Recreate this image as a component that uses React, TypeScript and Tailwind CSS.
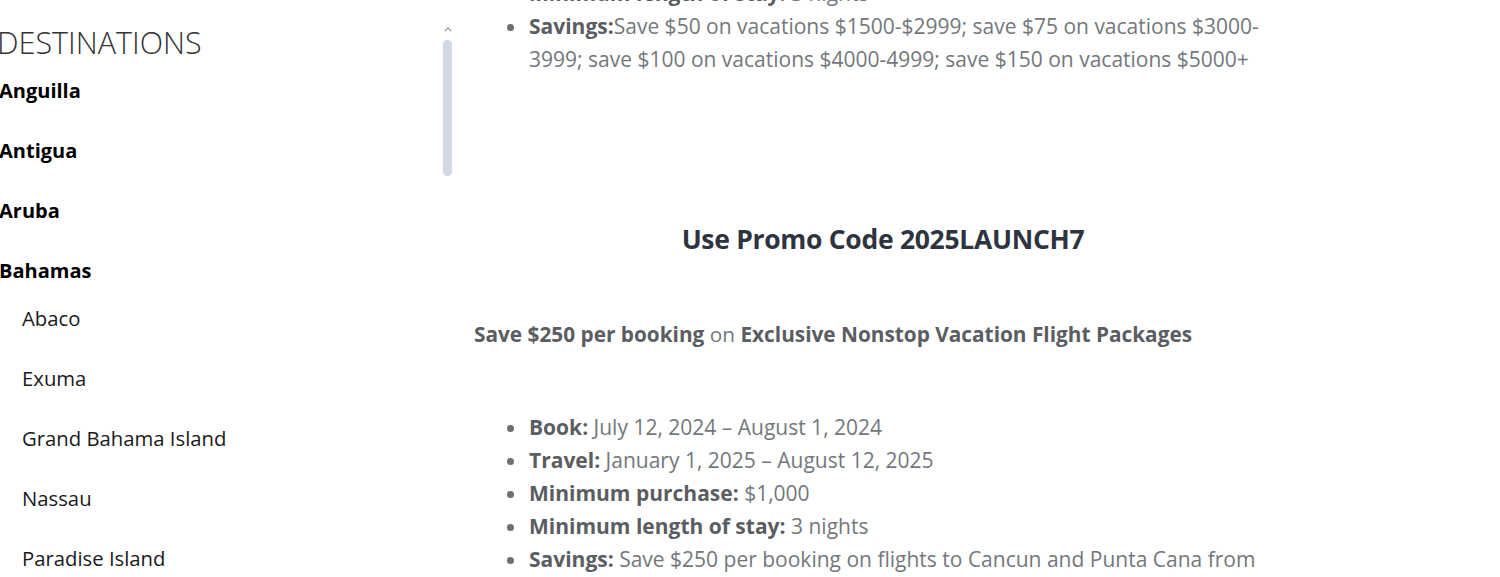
import React from 'react';

const COUNTRIES = ['Anguilla', 'Antigua', 'Aruba', 'Bahamas'];
const BAHAMAS = ['Abaco', 'Exuma', 'Grand Bahama Island', 'Nassau', 'Paradise Island'];

const PROMO_TERMS = [
  { label: 'Book:', value: 'July 12, 2024 – August 1, 2024' },
  { label: 'Travel:', value: 'January 1, 2025 – August 12, 2025' },
  { label: 'Minimum purchase:', value: '$1,000' },
  { label: 'Minimum length of stay:', value: '3 nights' },
  { label: 'Savings:', value: 'Save $250 per booking on flights to Cancun and Punta Cana from Chicago O’Hare' },
];

const font = { fontFamily: '"Open Sans", "Noto Sans", sans-serif' };

const Sidebar = () => (
  <div className="flex w-[477px] shrink-0 -ml-[3px]">
    <div className="flex flex-col w-[446px]">
      <h2 className="mt-[22px] h-[40px] leading-[40px] text-[30.5px] font-light text-[#333]">DESTINATIONS</h2>
      <div className="flex flex-col gap-[30px] mt-[14px] pl-[2px]">
        {COUNTRIES.map((c) => (
          <a key={c} className="h-[30px] leading-[30px] text-[20px] font-bold text-black">{c}</a>
        ))}
      </div>
      <div className="flex flex-col gap-[30px] mt-[17px] pl-[25px]">
        {BAHAMAS.map((c) => (
          <a key={c} className="h-[30px] leading-[30px] text-[20.3px] text-[#1a1a1a]">{c}</a>
        ))}
      </div>
    </div>
    {/* scrollbar */}
    <div className="flex flex-col items-center w-[9px] mt-[25px]">
      <svg width="10" height="8" viewBox="0 0 10 8" className="text-[#9aa1aa]">
        <path d="M2 6 L5 3 L8 6" fill="none" stroke="currentColor" strokeWidth="1.4" />
      </svg>
      <div className="w-[9px] h-[136px] mt-[7px] rounded-full bg-[#cfd8e3]" />
    </div>
  </div>
);

const Term = ({ label, value }: { label: string; value: React.ReactNode }) => (
  <li className="pl-[1px]">
    <span className="font-bold text-[#5a5d61]">{label}</span> {value}
  </li>
);

export default function App() {
  return (
    <div className="w-[1500px] h-[577px] overflow-hidden bg-white flex" style={font}>
      <Sidebar />
      <div className="flex flex-col w-[818px] text-[21px] leading-[33px] text-[#74777c]">
        <ul className="list-disc pl-[54px] mt-[-23px] marker:text-[#6c7075]">
          <Term label="Minimum length of stay:" value="3 nights" />
          <li className="pl-[1px]">
            <span className="font-bold text-[#5a5d61]">Savings:</span>Save $50 on vacations $1500-$2999; save $75 on vacations $3000-<wbr />3999; save $100 on vacations $4000-4999; save $150 on vacations $5000+
          </li>
        </ul>
        <h3 className="mt-[145px] h-[36px] leading-[36px] text-center text-[26.5px] font-bold text-[#2d3440] tracking-[-0.3px]">
          Use Promo Code 2025LAUNCH7
        </h3>
        <p className="mt-[61px] text-[20.8px]">
          <span className="font-bold text-[#5a5d61]">Save $250 per booking</span> on{' '}
          <span className="font-bold text-[#5a5d61]">Exclusive Nonstop Vacation Flight Packages</span>
        </p>
        <ul className="list-disc pl-[54px] mt-[60px] marker:text-[#6c7075]">
          {PROMO_TERMS.map((t) => (
            <Term key={t.label} label={t.label} value={t.value} />
          ))}
        </ul>
      </div>
    </div>
  );
}
